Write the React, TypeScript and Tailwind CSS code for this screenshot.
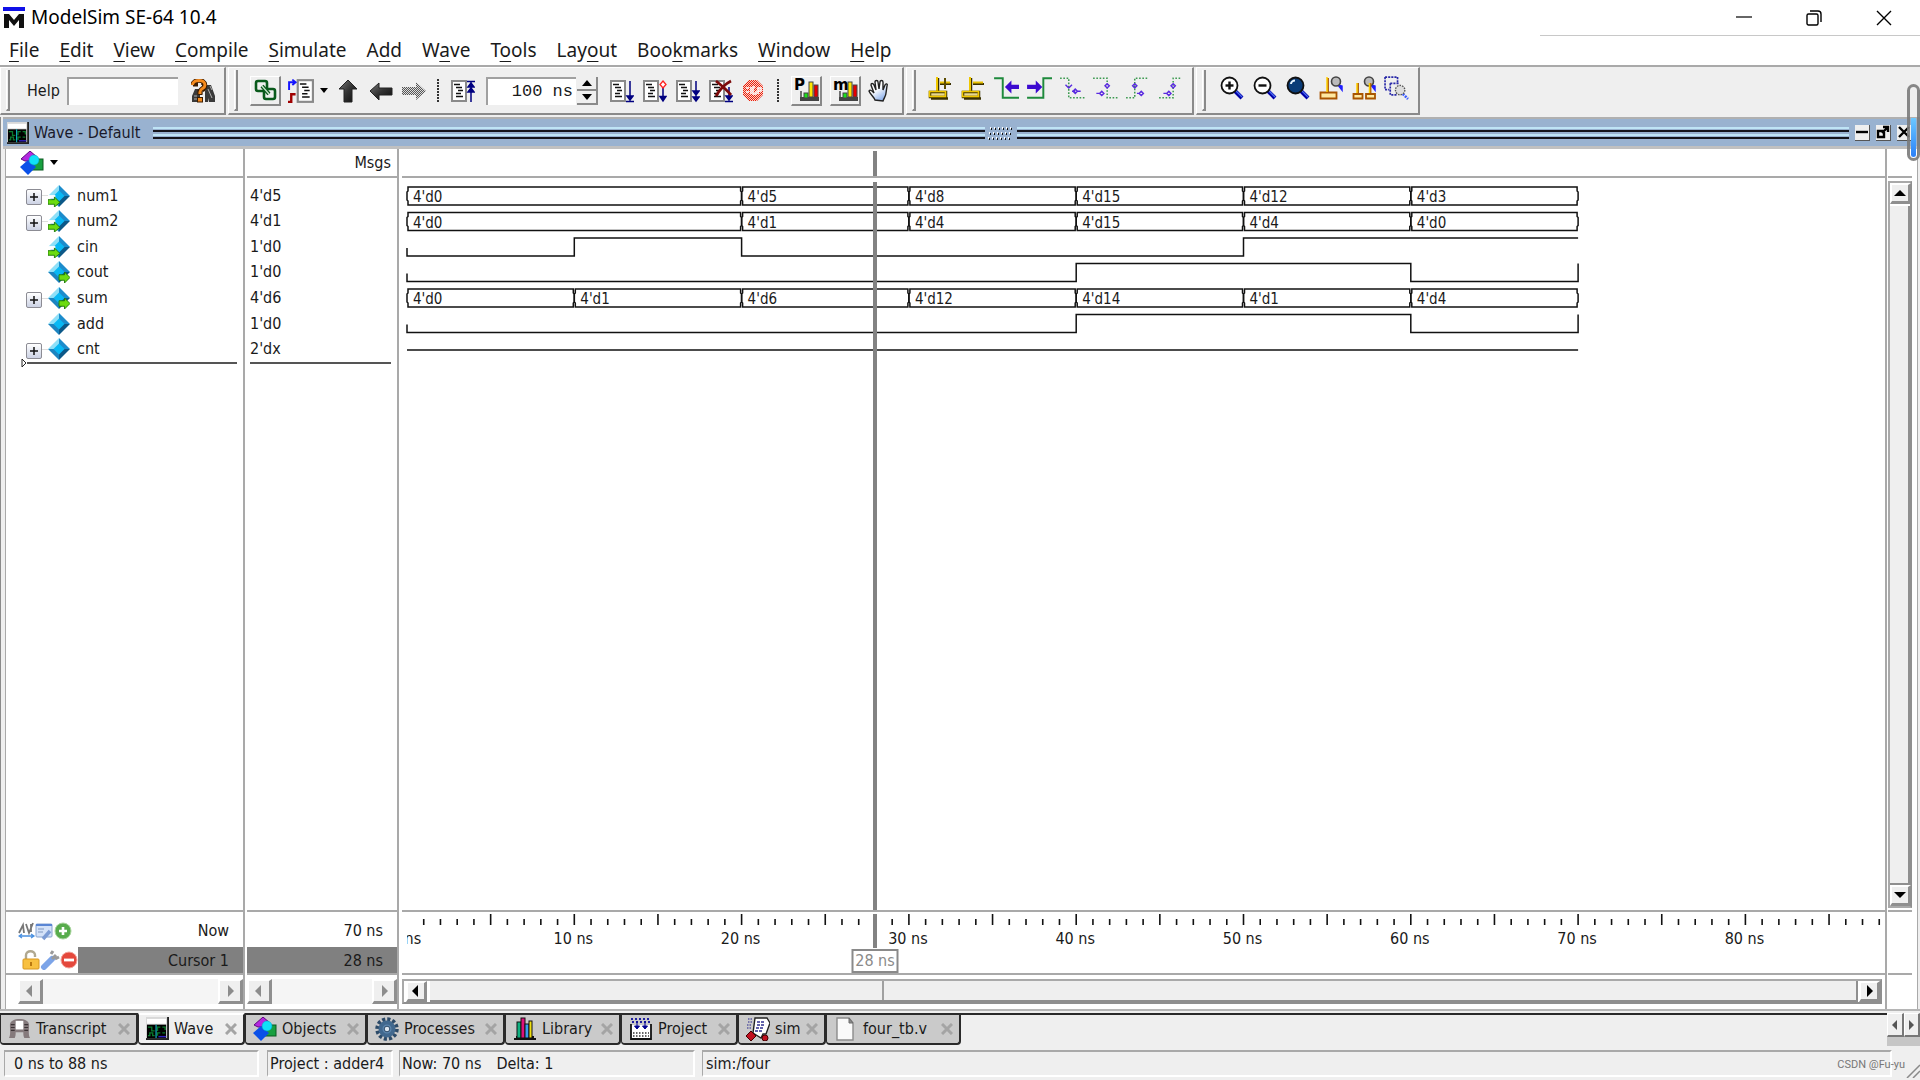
import type { ReactNode } from "react";
import { clsx } from "clsx";

type Kind = "in" | "out" | "internal";

interface Signal {
  name: string;
  kind: Kind;
  value: string;
  bus?: [number, string][];
  // level changes for single bit signals, first entry is the level at 0 ns
  bits?: [number, 0 | 1][];
}

const NS = 16.73;
const END = 70;
const CURSOR = 28;
const ROW = 25.5;

const SIGNALS: Signal[] = [
  {
    name: "num1",
    kind: "in",
    value: "4'd5",
    bus: [[0, "4'd0"], [20, "4'd5"], [30, "4'd8"], [40, "4'd15"], [50, "4'd12"], [60, "4'd3"]],
  },
  {
    name: "num2",
    kind: "in",
    value: "4'd1",
    bus: [[0, "4'd0"], [20, "4'd1"], [30, "4'd4"], [40, "4'd15"], [50, "4'd4"], [60, "4'd0"]],
  },
  { name: "cin", kind: "in", value: "1'd0", bits: [[0, 0], [10, 1], [20, 0], [50, 1]] },
  { name: "cout", kind: "out", value: "1'd0", bits: [[0, 0], [40, 1], [60, 0]] },
  {
    name: "sum",
    kind: "out",
    value: "4'd6",
    bus: [[0, "4'd0"], [10, "4'd1"], [20, "4'd6"], [30, "4'd12"], [40, "4'd14"], [50, "4'd1"], [60, "4'd4"]],
  },
  { name: "add", kind: "internal", value: "1'd0", bits: [[0, 0], [40, 1], [60, 0]] },
  { name: "cnt", kind: "internal", value: "2'dx" },
];

const MENUS: [string, string, string][] = [
  ["", "F", "ile"],
  ["", "E", "dit"],
  ["", "V", "iew"],
  ["", "C", "ompile"],
  ["", "S", "imulate"],
  ["A", "d", "d"],
  ["W", "a", "ve"],
  ["T", "o", "ols"],
  ["Lay", "o", "ut"],
  ["Boo", "k", "marks"],
  ["", "W", "indow"],
  ["", "H", "elp"],
];

function Icon({ children, size = 24 }: { children: ReactNode; size?: number }) {
  return (
    <svg width={size} height={size} viewBox="0 0 24 24" fill="none" className="shrink-0" aria-hidden="true">
      {children}
    </svg>
  );
}

/* ---------- toolbar icons ---------- */

function Page({ x = 1 }: { x?: number }) {
  return (
    <g transform={`translate(${x} 0)`}>
      <rect x="1" y="2" width="14" height="20" fill="#fff" stroke="#8a8a8a" strokeWidth="2" />
      <path d="M3 5.500h6M5 8.500h6M7 11.500h5M5 14.500h5M5 17.500h7" stroke="#111" strokeWidth="1.400" />
    </g>
  );
}

function BinocularsIcon() {
  return (
    <Icon>
      <path d="M1 23v-6l3-7h5v13zM14 23V12l2-6h4l4 11v6h-6l-1-4v4z" fill="#3a3a3a" />
      <path d="M3 17h3M3 20h3M17 10l4 9M19 7l2 4" stroke="#b0b0b0" />
      <path d="M2 5h5M11 3c4 2 3 6 0 8M9 11v5" stroke="#3c1c00" strokeWidth="5" />
      <path d="M1.500 6C2 0 14 0 14 6c0 4-5 3-5 7v2" stroke="#3c1c00" strokeWidth="4.600" />
      <path d="M1.500 6C2 0 14 0 14 6c0 4-5 3-5 7v2" stroke="#f58a1c" strokeWidth="3" />
      <rect x="6.500" y="18.500" width="5" height="4.500" fill="#f58a1c" stroke="#3c1c00" />
    </Icon>
  );
}

function CompileIcon() {
  return (
    <Icon>
      <g stroke="#0a5a1c" strokeWidth="2.6">
        <rect x="3" y="3" width="11" height="10" rx="2" />
        <rect x="11" y="11" width="11" height="10" rx="2" />
      </g>
      <path d="M9 8l7 8" stroke="#0a5a1c" strokeWidth="4" />
      <path d="M9 8l7 8" stroke="#cfe9d2" strokeWidth="1.2" />
    </Icon>
  );
}

function SourceIcon() {
  return (
    <Icon size={26}>
      <Page x={8} />
      <path d="M1 11V4h5M4 1.500l3 2.500-3 2.500" stroke="#1414ff" strokeWidth="1.8" />
      <path d="M0 22h3v-7h4" stroke="#a00000" strokeWidth="2.2" />
    </Icon>
  );
}

function ArrowShape({ d }: { d: string }) {
  return (
    <Icon>
      <defs>
        <linearGradient id="metal" x1="0" y1="0" x2="1" y2="1">
          <stop offset="0" stopColor="#777" />
          <stop offset="0.5" stopColor="#333" />
          <stop offset="1" stopColor="#0c0c0c" />
        </linearGradient>
      </defs>
      <path d={d} fill="url(#metal)" stroke="#222" />
    </Icon>
  );
}

function StippledArrowIcon() {
  return (
    <Icon>
      <defs>
        <pattern id="stipple" width="2" height="2" patternUnits="userSpaceOnUse">
          <rect width="2" height="2" fill="#ddd" />
          <rect width="1" height="1" fill="#555" />
          <rect x="1" y="1" width="1" height="1" fill="#555" />
        </pattern>
      </defs>
      <path d="M0 8h14V3l10 9-10 9v-5H0z" fill="url(#stipple)" />
    </Icon>
  );
}

function RestartIcon() {
  return (
    <Icon>
      <Page x={0} />
      <path d="M20 3v20M16 2.500h8M17 8l3-4 3 4zM17 13l3-4 3 4z" stroke="#000080" strokeWidth="1.500" fill="#000080" />
    </Icon>
  );
}

function RunIcon() {
  return (
    <Icon>
      <Page x={0} />
      <path d="M20 2v18M16 22.500h8M17 17h6L20 21z" stroke="#000080" strokeWidth="1.500" fill="#000080" />
    </Icon>
  );
}

function ContinueIcon() {
  return (
    <Icon>
      <Page x={0} />
      <path d="M20 8v12M17 17.500h6L20 22z" stroke="#000080" strokeWidth="1.500" fill="#000080" />
      <path d="M20 2l3 3.500L20 9l-3-3.500z" stroke="#ff2020" strokeWidth="1.300" fill="#fff" />
    </Icon>
  );
}

function RunAllIcon() {
  return (
    <Icon>
      <Page x={0} />
      <path d="M20 2v18M17 12h6L20 16zM17 18h6L20 22z" stroke="#000080" strokeWidth="1.500" fill="#000080" />
    </Icon>
  );
}

function BreakIcon() {
  return (
    <Icon>
      <Page x={0} />
      <path d="M20 8v12M16 22.500h8M17 17h6L20 21z" stroke="#000080" strokeWidth="1.500" fill="#000080" />
      <path d="M7 2c5 4 10 8 15 14M22 2C16 5 11 10 7 17" stroke="#7c0a0a" strokeWidth="2.800" />
    </Icon>
  );
}

function StopIcon() {
  return (
    <Icon>
      <defs>
        <pattern id="redStipple" width="2" height="2" patternUnits="userSpaceOnUse">
          <rect width="2" height="2" fill="#fbd0c8" />
          <rect width="1" height="1" fill="#e8200c" />
          <rect x="1" y="1" width="1" height="1" fill="#e8200c" />
        </pattern>
      </defs>
      <path d="M7 1h8l6 6v9l-6 6H7l-6-6V7z" fill="url(#redStipple)" />
      <path d="M4 9h3M4 13h3M9 8v7M13 8h-2v7h3v-3M16 15V9h3v3h-3" stroke="#fff" strokeWidth="1.500" />
    </Icon>
  );
}

function ProfileIcon({ letter }: { letter: string }) {
  return (
    <svg width="27" height="26" viewBox="0 0 27 26" fill="none" className="shrink-0" aria-hidden="true">
      <path d="M7 24h19v-4H7z" fill="#444" />
      <path d="M8 14v9" stroke="#444" strokeWidth="1.500" />
      <rect x="11" y="16" width="4" height="5" fill="#1be01b" stroke="#444" />
      <rect x="16" y="5" width="4" height="15" fill="#ffe600" stroke="#444" />
      <rect x="21" y="8" width="4" height="12" fill="#e60000" stroke="#444" />
      <text x="1" y="13" fontSize="15" fontWeight="900" fill="#000" className="font-['DejaVu_Sans']">
        {letter}
      </text>
    </svg>
  );
}

function HandIcon() {
  return (
    <Icon>
      <defs>
        <linearGradient id="palm" x1="0" y1="0" x2="0.6" y2="1">
          <stop offset="0.5" stopColor="#fff" />
          <stop offset="1" stopColor="#8fb2ec" />
        </linearGradient>
      </defs>
      <path
        d="M8 21c-1-3-5-6-6-9 1-2 3 0 5 2L4 6c0-2 2-2 3 0l2 5-1-8c0-2 3-2 3 0l1 7 1-7c0-2 3-2 3 0v8l2-5c1-2 3-1 2 1l-1 7c0 3-2 5-3 8z"
        fill="url(#palm)"
        stroke="#222"
        strokeWidth="1.400"
      />
    </Icon>
  );
}

function CursorPlusIcon({ plus }: { plus?: boolean }) {
  return (
    <Icon>
      <path d="M10 18V2M3 22.500h17" stroke="#3a3000" strokeWidth="2.500" />
      <path d="M9 17V1" stroke="#f0c800" strokeWidth="2" />
      <rect x="2" y="16" width="16" height="5" fill="#e8d890" stroke="#3a3000" strokeWidth="2.500" />
      <rect x="1.500" y="15.500" width="16" height="5" stroke="#f0c800" strokeWidth="1.600" />
      <path d="M12 8h11" stroke="#3a3000" strokeWidth="2" />
      <path d="M12 6.500h10" stroke="#e8c000" strokeWidth="2" />
      {plus && <path d="M17 2v11" stroke="#5c4c00" strokeWidth="2" />}
    </Icon>
  );
}

function PrevTransitionIcon() {
  return (
    <Icon size={26}>
      <path d="M1 3h8v18h15" stroke="#1e8a3c" strokeWidth="1.800" />
      <path d="M11 11l6-6v4h7v4h-7v4z" fill="#3c0ad0" />
    </Icon>
  );
}

function NextTransitionIcon() {
  return (
    <Icon size={26}>
      <path d="M1 21h15V3h8" stroke="#1e8a3c" strokeWidth="1.800" />
      <path d="M15 11L9 5v4H1v4h8v4z" fill="#3c0ad0" />
    </Icon>
  );
}

function DottedEdgeIcon({ edge, marks }: { edge: string; marks: string }) {
  return (
    <Icon size={26}>
      <path d={edge} stroke="#3c9a50" strokeWidth="1.400" strokeDasharray="1.5 1.5" />
      <path d={marks} stroke="#5a2ae0" strokeWidth="1.300" />
    </Icon>
  );
}

function ZoomIcon({ mode }: { mode: "in" | "out" | "full" }) {
  return (
    <Icon>
      <path d="M14 14l8 8" stroke="#0000a8" strokeWidth="4" />
      <path d="M15 14l7 7" stroke="#4a6cf0" strokeWidth="1.300" />
      <circle cx="9.500" cy="9.500" r="8" fill={mode === "full" ? "#0a3c78" : "#fff"} stroke="#111" strokeWidth="1.800" />
      {mode !== "full" && <path d="M5.500 9.500h8" stroke="#111" strokeWidth="2.400" />}
      {mode === "in" && <path d="M9.500 5.500v8" stroke="#111" strokeWidth="2.400" />}
      {mode === "full" && <path d="M5 8c0-2 2-3.500 4-3.500" stroke="#e8f4ff" strokeWidth="2" />}
    </Icon>
  );
}

function ZoomCursorIcon({ double }: { double?: boolean }) {
  return (
    <Icon>
      <path d="M19 9l4 5v-4z" fill="#2020ff" stroke="#2020ff" strokeWidth="1.500" />
      <circle cx="17" cy="5.500" r="4.500" fill="#bbb" stroke="#444" strokeWidth="1.600" />
      <g stroke="#a85400" strokeWidth="1.800" fill="#ffe9a0">
        {double ? (
          <path d="M6 7v11M1.500 18h9v4.500h-9zM18.500 7v11M14 18h9v4.500h-9z" />
        ) : (
          <path d="M9 2v14M1.500 16.500h16v6h-16z" />
        )}
      </g>
      <path d={double ? "M5 7v10M17.500 7v10" : "M8 1v15"} stroke="#ffd000" strokeWidth="1.500" />
    </Icon>
  );
}

function ZoomRangeIcon() {
  return (
    <Icon size={25}>
      <path d="M1 2h12v5M1 2v12h4M6 8h9M6 8v11h6" stroke="#2828a8" strokeWidth="1.600" strokeDasharray="2 1" />
      <path d="M18 18l5 5" stroke="#3c5cff" strokeWidth="2.500" strokeDasharray="2 1" />
      <circle cx="15.500" cy="14.500" r="4.500" fill="#ddd" stroke="#555" strokeWidth="1.300" strokeDasharray="1.5 1" />
    </Icon>
  );
}

/* ---------- pane and tab icons ---------- */

function WaveIcon({ size = 22 }: { size?: number }) {
  return (
    <Icon size={size}>
      <rect x="0" y="0" width="24" height="24" fill="#222" />
      <rect x="0" y="0" width="22" height="22" fill="#d8d8d8" />
      <rect x="1" y="2" width="20" height="5" fill="#fff" />
      <rect x="1" y="8" width="20" height="14" fill="#000" />
      <path d="M2 10.500h4v4h3M12 14.500v-4h3M17 10.500h3v3M2 19.500h2v-3h3v3h2M12 19.500v-3h3M17 16.500h3" stroke="#0a7a2c" strokeWidth="1.400" />
      <path d="M10.500 8v14" stroke="#10b8c8" strokeWidth="1.200" />
      <path d="M13 20.500h8" stroke="#3020c0" strokeWidth="1.500" />
    </Icon>
  );
}

function ObjectsIcon() {
  return (
    <Icon>
      <path d="M10 0L1 8l4 2h9l3-4z" fill="#b428e0" stroke="#5c0a7c" />
      <rect x="12" y="8" width="11" height="11" fill="#18a040" stroke="#0a5a20" />
      <path d="M8 9l8 7-8 8-8-8z" fill="#0a50e8" />
      <circle cx="14" cy="9" r="5" fill="#10e0f8" stroke="#08a0c0" strokeWidth="0.500" />
    </Icon>
  );
}

function TranscriptIcon() {
  return (
    <Icon size={23}>
      <path d="M1 22c2-4 1-8 1-14 0-8 20-8 20 0 0 6-1 10 1 14h-6c-1-2-1-4-1-6H8c0 2 0 4-1 6z" fill="#857a7c" />
      <path d="M3 8h4M3 11h4M3 14h4M17 8h4M17 11h4M17 14h4" stroke="#3c3436" strokeWidth="1.200" />
      <rect x="8" y="4" width="8" height="9" fill="#fff" />
    </Icon>
  );
}

function GearIcon() {
  return (
    <Icon>
      <circle cx="12" cy="12" r="9.500" stroke="#2c4a68" strokeWidth="4.500" strokeDasharray="3 1.97" />
      <circle cx="12" cy="12" r="6.500" fill="#5c86ae" stroke="#41688e" strokeWidth="4" />
      <circle cx="12" cy="12" r="2.800" fill="#dce6f0" stroke="#2c4a68" />
    </Icon>
  );
}

function LibraryIcon() {
  return (
    <Icon>
      <path d="M1 22h22M4 19v4M20 19v4" stroke="#111" strokeWidth="2" />
      <rect x="4" y="5" width="4" height="16" fill="#10b080" stroke="#111" />
      <rect x="8" y="1" width="4" height="20" fill="#e0107c" stroke="#111" />
      <rect x="12" y="7" width="4" height="14" fill="#3c9cf0" stroke="#111" />
      <rect x="16" y="4" width="3" height="17" fill="#f0e010" stroke="#111" />
    </Icon>
  );
}

function ProjectIcon() {
  return (
    <Icon>
      <path d="M2 2h20M3 5h18" stroke="#2020a0" strokeWidth="2" strokeDasharray="2 2" />
      <rect x="2" y="8" width="20" height="14" fill="#fff" />
      <path d="M2 7v15h20V7" stroke="#111" strokeWidth="1.800" />
      <path d="M4 16h16M4 19h16" stroke="#333" strokeWidth="1.400" strokeDasharray="1.5 1.5" />
      <path d="M8 4v5M16 4v5M5.500 9h5L8 12zM13.500 9h5L16 12z" fill="#000090" stroke="#000090" />
    </Icon>
  );
}

function SimIcon() {
  return (
    <Icon>
      <path d="M2 2h5M2 5h4M1 8h4M1 11h4" stroke="#5858a0" strokeDasharray="1.5 1" strokeWidth="1.500" />
      <path d="M9 1h12l3 5-4 11h-3l-2 4-8-5z" fill="#fff" stroke="#222" strokeWidth="1.400" />
      <path d="M11 5h8M11 8h8M10 11h8M9 14h7" stroke="#303090" strokeDasharray="3 1" strokeWidth="1.300" />
      <path d="M5 14l5 5-5 5-5-5z" fill="#c01020" stroke="#400" />
      <circle cx="19" cy="21" r="3" fill="#c01020" stroke="#400" />
    </Icon>
  );
}

function FileIcon() {
  return (
    <Icon>
      <path d="M3 1h12l4 5v17H3z" fill="#fafafa" stroke="#8c8c8c" strokeWidth="1.400" />
      <path d="M15 1v5h4z" fill="#8c8c8c" stroke="#6c6c6c" />
    </Icon>
  );
}

function SignalIcon({ kind }: { kind: Kind }) {
  return (
    <Icon size={22}>
      <path d="M12 0v12H0z" fill="#8fe0f8" />
      <path d="M12 0l12 12H12z" fill="#1c8ccc" />
      <path d="M0 12h12v12z" fill="#1c84c0" />
      <path d="M24 12L12 24V12z" fill="#0c5888" />
      <path d="M12 6l6 6-6 6-6-6z" fill="#08b8f4" />
      {kind === "in" && (
        <>
          <path d="M0 11h8v4H0z" fill="#fff" />
          <path d="M0 16h7v-3l6 6-6 5v-3H0z" fill="#6cdc10" stroke="#1c7808" />
        </>
      )}
      {kind === "out" && <path d="M12 15h6v-3l6 6-6 6v-3h-6z" fill="#6cdc10" stroke="#1c7808" />}
    </Icon>
  );
}

/* ---------- small controls ---------- */

function ToolButton({ label, raised, children }: { label: string; raised?: boolean; children: ReactNode }) {
  return (
    <button
      type="button"
      aria-label={label}
      className={clsx(
        "flex h-[30px] shrink-0 items-center justify-center",
        raised
          ? "mx-px w-[31px] border-t border-r-2 border-b-2 border-l border-t-white border-r-[#888] border-b-[#888] border-l-white"
          : "w-[33px]",
      )}
    >
      {children}
    </button>
  );
}

function ToolGroup({ children }: { children: ReactNode }) {
  return (
    <div className="mr-[2px] flex h-[48px] shrink-0 items-start border-t border-r-2 border-b-2 border-l border-t-white border-r-[#8a8a8a] border-b-[#8a8a8a] border-l-white pt-[2px] pl-[5px]">
      <div className="h-[41px] w-[4px] border-r-2 border-b-2 border-l border-r-[#8a8a8a] border-b-[#8a8a8a] border-l-white" />
      <div className="flex h-[41px] items-center">{children}</div>
    </div>
  );
}

function ToolSeparator() {
  return (
    <div className="mx-[7px] h-[23px] w-[2px] shrink-0 bg-[repeating-linear-gradient(to_bottom,#333_0_2px,transparent_2px_3px)]" />
  );
}

function ScrollArrow({ dir, disabled }: { dir: "left" | "right" | "up" | "down"; disabled?: boolean }) {
  const points = {
    left: "8,0 8,12 2,6",
    right: "4,0 4,12 10,6",
    up: "0,9 12,9 6,3",
    down: "0,3 12,3 6,9",
  };
  return (
    <button
      type="button"
      aria-label={`Scroll ${dir}`}
      disabled={disabled}
      className={clsx(
        "flex shrink-0 items-center justify-center border-t-2 border-r-[3px] border-b-[3px] border-l-2 border-t-white border-r-[#8f8f8f] border-b-[#8f8f8f] border-l-white bg-[#efefef]",
        disabled ? "h-[25px] w-[25px]" : "h-[21px] w-[21px]",
      )}
    >
      <svg width="12" height="12" viewBox="0 0 12 12" aria-hidden="true">
        <polygon points={points[dir]} fill={disabled ? "#8c8c8c" : "#000"} />
      </svg>
    </button>
  );
}

function DisabledScrollbar() {
  return (
    <div className="flex flex-1 justify-between bg-[#f5f5f5]">
      <ScrollArrow dir="left" disabled />
      <ScrollArrow dir="right" disabled />
    </div>
  );
}

function PaneButton({ label, d }: { label: string; d: string }) {
  return (
    <button
      type="button"
      aria-label={label}
      className="mr-[6px] flex h-[16px] w-[15px] items-center justify-center border-r border-b border-[#555] bg-[#efefef]"
    >
      <svg width="14" height="14" viewBox="0 0 14 14" fill="none" aria-hidden="true">
        <path d={d} stroke="#000" strokeWidth="2.400" />
      </svg>
    </button>
  );
}

/* ---------- waveform ---------- */

const timeX = (t: number) => t * NS + 5;

function Trace({ signal, index }: { signal: Signal; index: number }) {
  const top = 9 + index * ROW;
  const bottom = top + 18;
  const mid = top + 9;

  if (signal.bus) {
    return (
      <g>
        {signal.bus.map(([start, label], i) => {
          const x0 = timeX(start);
          const x1 = timeX(signal.bus![i + 1]?.[0] ?? END);
          return (
            <g key={start}>
              <path
                d={`M${x0} ${mid - 4}L${x0 + 1} ${mid - 5}V${top}H${x1 - 1}V${mid - 5}L${x1} ${mid - 4}V${mid + 4}L${x1 - 1} ${mid + 5}V${bottom}H${x0 + 1}V${mid + 5}L${x0} ${mid + 4}Z`}
                fill="none"
                stroke="#111"
                strokeWidth="1.5"
              />
              <text x={x0 + 6} y={mid + 6} fontSize="15" fill="#1a1a1a">
                {label}
              </text>
            </g>
          );
        })}
      </g>
    );
  }

  if (!signal.bits) {
    return <path d={`M${timeX(0)} ${mid + 1}H${timeX(END)}`} stroke="#111" strokeWidth="1.5" />;
  }

  let d = `M${timeX(0)} ${bottom - 8}V${bottom}`;
  signal.bits.slice(1).forEach(([t, level]) => {
    d += `H${timeX(t)}V${level ? top : bottom}`;
  });
  d += `H${timeX(END)}`;
  if (signal.bits[signal.bits.length - 1][1] === 0) d += `V${top}`;
  return <path d={d} fill="none" stroke="#111" strokeWidth="1.5" />;
}

function Ruler() {
  const ticks = Array.from({ length: 88 }, (_, i) => i + 1);
  return (
    <svg className="block h-[61px] w-full" aria-hidden="true">
      {ticks.map((t) => (
        <path key={t} d={`M${t * NS} ${t % 5 ? 7 : 2}V13`} stroke="#111" strokeWidth="1.6" />
      ))}
      {[0, 10, 20, 30, 40, 50, 60, 70, 80].map((t) => (
        <text key={t} x={t * NS - 1} y="32" fontSize="16" textAnchor="middle" fill="#1a1a1a">
          {t} ns
        </text>
      ))}
    </svg>
  );
}

// vertical marker of the active cursor, drawn over whichever strip holds it
function CursorLine({ className }: { className: string }) {
  return (
    <div
      className={clsx("absolute w-[4px] bg-[#828282]", className)}
      style={{ left: Math.round(timeX(CURSOR)) - 2 }}
    />
  );
}

/* ---------- columns ---------- */

const HEAD = "flex h-[29px] shrink-0 items-center border-b-2 border-[#a9a9a9]";
const FOOT = "h-[65px] shrink-0 border-y-2 border-[#a9a9a9]";

function NameColumn() {
  return (
    <section className="flex w-[240px] shrink-0 flex-col border-r-2 border-l border-[#a9a9a9]">
      <div className={clsx(HEAD, "pl-[14px]")}>
        <button type="button" aria-label="Object filter" className="flex items-center gap-[6px]">
          <ObjectsIcon />
          <svg width="8" height="5" aria-hidden="true">
            <polygon points="0,0 8,0 4,5" fill="#000" />
          </svg>
        </button>
      </div>
      <div className="flex-1">
        <ul className="mt-[5px] grid h-[179px] grid-rows-7 pl-5">
          {SIGNALS.map((s) => (
            <li key={s.name} className="flex items-center">
              {s.bits ? (
                <span className="w-[22px]" />
              ) : (
                <>
                  <button
                    type="button"
                    aria-label={`Expand ${s.name}`}
                    className="mt-[3px] flex h-4 w-4 items-center justify-center rounded-[2px] border border-[#8c8c94] bg-linear-to-b from-white to-[#ccd2e4]"
                  >
                    <svg width="8" height="8" aria-hidden="true">
                      <path d="M0 4h8M4 0v8" stroke="#111" strokeWidth="1.500" />
                    </svg>
                  </button>
                  <span className="w-[6px] border-t border-[#ddd]" />
                </>
              )}
              <SignalIcon kind={s.kind} />
              <span className="pl-[7px]">{s.name}</span>
            </li>
          ))}
        </ul>
        <div className="flex h-[10px] -translate-y-1 items-center pl-[15px]">
          <svg width="6" height="10" aria-hidden="true">
            <path d="M1 1l4 4-4 4z" fill="#fff" stroke="#222" />
          </svg>
          <div className="mr-[6px] h-[2px] flex-1 bg-[#555]" />
        </div>
      </div>
      <div className={FOOT}>
        <div className="flex h-[35px] items-center pt-[2px] pr-[14px] pl-[12px]">
          <svg width="54" height="20" viewBox="0 0 54 20" fill="none" aria-hidden="true">
            <path d="M1 12l4-8 1 8M8 3l3 9 4-10M13 3v8" stroke="#777" strokeWidth="1.800" />
            <path d="M1 15h15M4 13l-3 2 3 2M13 13l3 2-3 2" stroke="#4a90e0" strokeWidth="1.300" />
            <rect x="18" y="3" width="16" height="13" rx="1" fill="#d4e2f8" stroke="#88a4d0" />
            <path d="M18 4h16" stroke="#5a86d4" strokeWidth="2" />
            <path d="M20 8h6M20 11h5" stroke="#8098c0" />
            <path d="M25 18l7-8" stroke="#7c9cd4" strokeWidth="3.500" />
            <circle cx="45" cy="10" r="8" fill="#58ac4c" stroke="#a8d49c" />
            <path d="M45 6v8M41 10h8" stroke="#fff" strokeWidth="2.600" />
          </svg>
          <span className="flex-1 text-right">Now</span>
        </div>
        <div className="flex h-[26px] items-center">
          <svg className="ml-[16px] shrink-0" width="56" height="20" viewBox="0 0 56 20" fill="none" aria-hidden="true">
            <path d="M4 9V5c0-5 9-5 9 0v2" stroke="#b0a890" strokeWidth="2.400" />
            <rect x="1" y="9" width="16" height="10" rx="1" fill="#f8c040" stroke="#d89820" />
            <path d="M9 12v4" stroke="#b87810" strokeWidth="2" />
            <path d="M22 17l8-8" stroke="#7ca4e8" strokeWidth="6" strokeLinecap="round" />
            <path d="M30 9l4-4M29 4l2-3M33 9l4-2" stroke="#9a9a9a" strokeWidth="3" />
            <circle cx="47" cy="10" r="8" fill="#e4483c" stroke="#f4a49c" />
            <path d="M42 10h10" stroke="#fff" strokeWidth="2.800" />
          </svg>
          <div className="flex h-[26px] flex-1 items-center justify-end bg-[#808080] pt-[2px] pr-[14px]">
            Cursor 1
          </div>
        </div>
      </div>
      <div className="flex h-[34px] items-start pt-1 pl-3">
        <DisabledScrollbar />
      </div>
    </section>
  );
}

function ValueColumn() {
  return (
    <section className="flex w-[154px] shrink-0 flex-col border-r-2 border-[#a9a9a9] pl-[2px]">
      <div className={clsx(HEAD, "justify-end pr-[6px]")}>Msgs</div>
      <div className="flex-1">
        <ul className="mt-[5px] grid h-[179px] grid-rows-7 pl-[3px]">
          {SIGNALS.map((s) => (
            <li key={s.name} className="flex items-center">
              {s.value}
            </li>
          ))}
        </ul>
        <div className="mr-[6px] ml-[3px] h-[2px] bg-[#555]" />
      </div>
      <div className={FOOT}>
        <div className="flex h-[35px] items-center justify-end pt-[2px] pr-[14px]">70 ns</div>
        <div className="flex h-[26px] items-center justify-end bg-[#808080] pt-[2px] pr-[14px]">28 ns</div>
      </div>
      <div className="flex h-[34px] items-start pt-1">
        <DisabledScrollbar />
      </div>
    </section>
  );
}

function WaveColumn() {
  return (
    <section className="flex min-w-0 flex-1 flex-col border-r-2 border-[#a9a9a9] pl-[3px]">
      <div className={clsx(HEAD, "relative")}>
        <CursorLine className="top-[2px] bottom-0" />
      </div>
      <div className="relative flex-1 overflow-hidden">
        <svg className="block h-[200px] w-full" aria-label="Waveforms">
          {SIGNALS.map((s, i) => (
            <Trace key={s.name} signal={s} index={i} />
          ))}
        </svg>
        <CursorLine className="top-[4px] bottom-0" />
      </div>
      <div className={clsx(FOOT, "relative pl-[5px]")}>
        <Ruler />
        <CursorLine className="top-[2px] h-[34px]" />
        <div
          className="absolute top-[37px] flex h-[24px] w-[47px] -translate-x-1/2 items-center justify-center border-2 border-[#8a8a8a] bg-white text-[#8a8a8a]"
          style={{ left: Math.round(timeX(CURSOR)) }}
        >
          28 ns
        </div>
      </div>
      <div className="h-[34px] pt-1 pr-[3px]">
        <div className="flex h-[25px] items-center border-2 border-[#a9a9a9] border-r-[#8f8f8f] border-b-[#8f8f8f] bg-white pl-[2px]">
          <ScrollArrow dir="left" />
          <div className="mr-px ml-[3px] flex h-[21px] min-w-0 flex-1 border-r-2 border-b-2 border-[#8f8f8f] bg-[#efefef]">
            <div className="w-[454px] border-r-2 border-[#a0a0a0]" />
          </div>
          <ScrollArrow dir="right" />
        </div>
      </div>
    </section>
  );
}

function ScrollColumn() {
  return (
    <section className="flex w-[30px] shrink-0 flex-col pr-[5px] pl-px">
      <div className={HEAD} />
      <div className="flex flex-1 flex-col pt-[3px] pb-[2px]">
        <div className="flex flex-1 flex-col items-center border-2 border-[#a9a9a9] border-r-[#8f8f8f] bg-white">
          <ScrollArrow dir="up" />
          <div className="mt-[2px] w-[20px] flex-1 border-r-2 border-b-2 border-[#8f8f8f] bg-[#efefef]" />
          <ScrollArrow dir="down" />
        </div>
      </div>
      <div className={FOOT} />
      <div className="h-[34px]" />
    </section>
  );
}

/* ---------- window chrome ---------- */

function TitleBar() {
  return (
    <header className="flex h-[35px] shrink-0 items-center bg-white pl-[3px]">
      <svg width="22" height="24" viewBox="0 0 22 24" aria-hidden="true">
        <rect x="0" y="1" width="22" height="4" fill="#1010e8" />
        <path d="M1 22V8h5l5 6 5-6h5v14h-5v-8l-5 6-5-6v8z" fill="#111" />
      </svg>
      <h1 className="flex-1 pb-[2px] pl-[6px] font-['Noto_Sans',sans-serif] text-[19px] text-black">
        ModelSim SE-64 10.4
      </h1>
      <div className="flex items-center gap-[54px] pr-[28px]">
        <button type="button" aria-label="Minimize">
          <svg width="16" height="16" aria-hidden="true">
            <path d="M0 7h16" stroke="#000" strokeWidth="1.200" />
          </svg>
        </button>
        <button type="button" aria-label="Restore">
          <svg width="16" height="16" fill="none" stroke="#000" strokeWidth="1.400" aria-hidden="true">
            <rect x="1" y="4" width="11" height="11" rx="1.500" />
            <path d="M4 1h8q3 0 3 3v8" />
          </svg>
        </button>
        <button type="button" aria-label="Close">
          <svg width="16" height="16" stroke="#000" strokeWidth="1.400" aria-hidden="true">
            <path d="M1 1l14 14M15 1L1 15" />
          </svg>
        </button>
      </div>
    </header>
  );
}

function MenuBar() {
  return (
    <nav className="flex h-[30px] shrink-0 items-center gap-5 bg-white pb-px pl-[9px] font-['Noto_Sans',sans-serif] text-[19px]">
      {MENUS.map(([before, key, after]) => (
        <button type="button" key={before + key + after}>
          {before}
          <span className="underline underline-offset-4">{key}</span>
          {after}
        </button>
      ))}
    </nav>
  );
}

function Toolbar() {
  return (
    <div className="flex h-[52px] shrink-0 border-t-2 border-[#a9a9a9]">
      <ToolGroup>
        <label htmlFor="help-search" className="w-[57px] pl-[17px]">
          Help
        </label>
        <input
          id="help-search"
          className="h-[28px] w-[111px] border-t-2 border-l-2 border-[#a0a0a0] bg-white outline-none"
        />
        <div className="w-[8px]" />
        <ToolButton label="Search help">
          <BinocularsIcon />
        </ToolButton>
        <div className="w-[5px]" />
      </ToolGroup>

      <ToolGroup>
        <div className="w-[11px]" />
        <ToolButton label="Compile" raised>
          <CompileIcon />
        </ToolButton>
        <div className="w-[2px]" />
        <ToolButton label="Event traceback">
          <SourceIcon />
        </ToolButton>
        <button type="button" aria-label="Traceback options" className="flex w-[14px] justify-center">
          <svg width="8" height="5" aria-hidden="true">
            <polygon points="0,0 8,0 4,5" fill="#000" />
          </svg>
        </button>
        <ToolButton label="Up">
          <ArrowShape d="M12 1l9 9h-5v13H8V10H3z" />
        </ToolButton>
        <ToolButton label="Back">
          <ArrowShape d="M1 12l9-8v5h13v7H10v5z" />
        </ToolButton>
        <ToolButton label="Forward">
          <StippledArrowIcon />
        </ToolButton>
        <ToolSeparator />
        <ToolButton label="Restart">
          <RestartIcon />
        </ToolButton>
        <input
          aria-label="Run length"
          defaultValue="100 ns"
          className="ml-[7px] h-[28px] w-[90px] border-t-2 border-l-2 border-[#a0a0a0] bg-white pr-[3px] text-right font-['Liberation_Mono',monospace] text-[17px] outline-none"
        />
        <div className="mr-[7px] ml-px flex w-[21px] flex-col">
          {["M0 7h10L5 1z", "M0 1h10L5 7z"].map((d, i) => (
            <button
              key={d}
              type="button"
              aria-label={i ? "Decrease run length" : "Increase run length"}
              className="flex h-[14px] items-center justify-center border-r-2 border-b-2 border-[#8a8a8a]"
            >
              <svg width="10" height="8" aria-hidden="true">
                <path d={d} fill="#000" />
              </svg>
            </button>
          ))}
        </div>
        <ToolButton label="Run">
          <RunIcon />
        </ToolButton>
        <ToolButton label="Continue run">
          <ContinueIcon />
        </ToolButton>
        <ToolButton label="Run all">
          <RunAllIcon />
        </ToolButton>
        <ToolButton label="Break">
          <BreakIcon />
        </ToolButton>
        <ToolButton label="Stop">
          <StopIcon />
        </ToolButton>
        <ToolSeparator />
        <div className="w-[4px]" />
        <ToolButton label="Performance profiling" raised>
          <ProfileIcon letter="P" />
        </ToolButton>
        <div className="w-[6px]" />
        <ToolButton label="Memory profiling" raised>
          <ProfileIcon letter="m" />
        </ToolButton>
        <ToolButton label="Pan">
          <HandIcon />
        </ToolButton>
        <div className="w-[7px]" />
      </ToolGroup>

      <ToolGroup>
        <div className="flex items-center pr-[5px] pb-[6px] pl-[7px]">
          <ToolButton label="Insert cursor">
            <CursorPlusIcon plus />
          </ToolButton>
          <ToolButton label="Delete cursor">
            <CursorPlusIcon />
          </ToolButton>
          <ToolButton label="Previous transition">
            <PrevTransitionIcon />
          </ToolButton>
          <ToolButton label="Next transition">
            <NextTransitionIcon />
          </ToolButton>
          <ToolButton label="Previous falling edge">
            <DottedEdgeIcon edge="M1 3h8v18h15" marks="M6 9l3 3 3-3M12 15h3M15 13l2 2-2 2-2-2zM17 15h3" />
          </ToolButton>
          <ToolButton label="Next falling edge">
            <DottedEdgeIcon edge="M1 3h13v18h10" marks="M14 8l2 2-2 2-2-2zM4 17h4M9 15l2 2-2 2-2-2z" />
          </ToolButton>
          <ToolButton label="Previous rising edge">
            <DottedEdgeIcon edge="M1 21h8V3h13" marks="M9 8l2 2-2 2-2-2zM11 17h3M15 15l2 2-2 2-2-2z" />
          </ToolButton>
          <ToolButton label="Next rising edge">
            <DottedEdgeIcon edge="M1 21h13V3h8" marks="M14 8l2 2-2 2-2-2zM5 17h4M10 15l2 2-2 2-2-2z" />
          </ToolButton>
        </div>
      </ToolGroup>

      <ToolGroup>
        <div className="flex items-center pr-[5px] pb-[6px] pl-[9px]">
          <ToolButton label="Zoom in">
            <ZoomIcon mode="in" />
          </ToolButton>
          <ToolButton label="Zoom out">
            <ZoomIcon mode="out" />
          </ToolButton>
          <ToolButton label="Zoom full">
            <ZoomIcon mode="full" />
          </ToolButton>
          <ToolButton label="Zoom in on cursor">
            <ZoomCursorIcon />
          </ToolButton>
          <ToolButton label="Zoom between cursors">
            <ZoomCursorIcon double />
          </ToolButton>
          <ToolButton label="Zoom range">
            <ZoomRangeIcon />
          </ToolButton>
        </div>
      </ToolGroup>
    </div>
  );
}

function Groove() {
  return (
    <div className="flex flex-1 flex-col gap-[2px]">
      <div className="h-[5px] border-t-2 border-b-2 border-t-[#bfe4f6] border-b-[#15151c]" />
      <div className="h-[5px] border-t-2 border-b-2 border-t-[#bfe4f6] border-b-[#15151c]" />
    </div>
  );
}

function PaneTitle() {
  return (
    <div className="flex h-[32px] shrink-0 items-center border-t-2 border-b-[3px] border-t-[#b0b0b0] border-b-[#c0c0c0] bg-[#99b2d0] pl-[4px]">
      <WaveIcon />
      <h2 className="w-[124px] pl-[5px] text-[#1a1a2a]">Wave - Default</h2>
      <Groove />
      <svg width="32" height="14" aria-hidden="true">
        {[0, 1, 2, 3, 4, 5].map((i) => (
          <g key={i}>
            <path d={`M${5 + i * 4} 2h1M${4 + i * 4} 7h1M${3 + i * 4} 12h1`} stroke="#fff" strokeWidth="2" />
            <path d={`M${6 + i * 4} 3h1M${5 + i * 4} 8h1M${4 + i * 4} 13h1`} stroke="#111" strokeWidth="2" />
          </g>
        ))}
      </svg>
      <Groove />
      <div className="flex pl-[6px]">
        <PaneButton label="Minimize pane" d="M1 7h12" />
        <PaneButton label="Undock pane" d="M2 6h6v6H2zM6 8l6-6M7 2h5v5" />
        <PaneButton label="Close pane" d="M2 2l10 10M12 2L2 12" />
      </div>
      <div className="w-[2px]" />
    </div>
  );
}

const TABS: { label: string; icon: ReactNode; width: string; active?: boolean }[] = [
  { label: "Transcript", icon: <TranscriptIcon />, width: "w-[138px]" },
  { label: "Wave", icon: <WaveIcon size={23} />, width: "w-[107px]", active: true },
  { label: "Objects", icon: <ObjectsIcon />, width: "w-[122px]" },
  { label: "Processes", icon: <GearIcon />, width: "w-[138px]" },
  { label: "Library", icon: <LibraryIcon />, width: "w-[116px]" },
  { label: "Project", icon: <ProjectIcon />, width: "w-[117px]" },
  { label: "sim", icon: <SimIcon />, width: "w-[88px]" },
  { label: "four_tb.v", icon: <FileIcon />, width: "w-[135px]" },
];

function TabStrip() {
  return (
    <div className="flex h-[38px] shrink-0 border-t-2 border-[#b5b5b5] pt-[2px]">
      <div className="flex h-[32px] min-w-0 flex-1 border-t-2 border-[#2a2a2a]" role="tablist">
        {TABS.map((tab) => (
          <div
            key={tab.label}
            className={clsx(
              "flex shrink-0 items-center justify-between rounded-b-[4px] border-r-2 border-b-2 border-l border-[#2a2a2a] pr-[6px] pb-px pl-[7px]",
              tab.width,
              tab.active ? "-mt-[2px] border-t-2 border-t-white bg-[#efefef]" : "bg-[#cacaca]",
            )}
          >
            <button type="button" role="tab" aria-selected={!!tab.active} className="flex items-center gap-[5px]">
              {tab.icon}
              <span>{tab.label}</span>
            </button>
            <button type="button" aria-label={`Close ${tab.label}`}>
              <svg width="12" height="12" aria-hidden="true">
                <path d="M1 1l10 10M11 1L1 11" stroke="#a4a4a4" strokeWidth="3" />
              </svg>
            </button>
          </div>
        ))}
      </div>
      <div className="flex h-[33px] w-[33px] items-start bg-[#c6c6c6]">
        {["M7 2L2 7l5 5z", "M3 2l5 5-5 5z"].map((d, i) => (
          <button
            key={d}
            type="button"
            aria-label={i ? "Next tabs" : "Previous tabs"}
            className="flex h-[24px] flex-1 items-center justify-center border-t border-r-2 border-b-2 border-l border-t-white border-r-[#777] border-b-[#777] border-l-white bg-[#efefef]"
          >
            <svg width="10" height="14" aria-hidden="true">
              <path d={d} fill="#555" />
            </svg>
          </button>
        ))}
      </div>
    </div>
  );
}

function StatusBar() {
  const cell =
    "flex h-[27px] items-center border-t-2 border-r-2 border-b-2 border-l border-t-[#a9a9a9] border-r-white border-b-white border-l-[#a9a9a9]";
  return (
    <footer className="flex h-[33px] shrink-0 items-start pt-[3px] pl-[4px]">
      <div className={clsx(cell, "mr-2 w-[255px] pl-[9px]")}>0 ns to 88 ns</div>
      <div className={clsx(cell, "mr-[6px] w-[126px] pl-[2px]")}>Project : adder4</div>
      <div className={clsx(cell, "mr-[7px] w-[296px] gap-[15px] pl-[2px]")}>
        <span>Now: 70 ns</span>
        <span>Delta: 1</span>
      </div>
      <div className={clsx(cell, "mr-[28px] flex-1 pl-[3px]")}>sim:/four</div>
    </footer>
  );
}

export default function App() {
  return (
    <div className="relative flex h-screen flex-col overflow-hidden bg-[#efefef] font-['DejaVu_Sans_Condensed','DejaVu_Sans',sans-serif] text-[16px] leading-5 text-[#1a1a1a]">
      <TitleBar />
      <MenuBar />
      <Toolbar />
      <main className="flex min-h-0 flex-1 flex-col border-l border-[#8a8a8a] pl-[2px]">
        <PaneTitle />
        <div className="mr-[2px] ml-[2px] flex min-h-0 flex-1 border-r border-[#a9a9a9] bg-white">
          <NameColumn />
          <ValueColumn />
          <WaveColumn />
          <ScrollColumn />
        </div>
      </main>
      <TabStrip />
      <StatusBar />

      <div className="absolute top-[35px] right-0 w-[380px] border-t border-[#c8c8c8]" />
      <div className="absolute top-[84px] right-0 flex h-[77px] w-[13px] flex-col justify-end rounded-full border-[3px] border-[#7a7a7a]/90 px-px pb-px">
        <div className="h-[39px] rounded-b-full bg-linear-to-b from-[#6cc8ff] to-[#2c80f8]" />
      </div>
      <div className="absolute right-[15px] bottom-[7px] font-['Roboto',sans-serif] text-[11px] leading-4 text-[#777]">
        CSDN @Fu-yu
      </div>
      <svg className="absolute right-0 bottom-[2px]" width="14" height="14" aria-hidden="true">
        <path d="M1 14L14 1M7 14l7-7" stroke="#8a8a8a" strokeWidth="1.500" />
      </svg>
    </div>
  );
}
